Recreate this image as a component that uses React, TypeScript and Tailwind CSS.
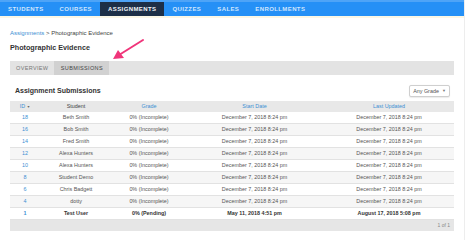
const navItems = ["STUDENTS", "COURSES", "ASSIGNMENTS", "QUIZZES", "SALES", "ENROLLMENTS"]

const rows = [
  { id: "18", student: "Beth Smith", grade: "0% (Incomplete)", start: "December 7, 2018 8:24 pm", updated: "December 7, 2018 8:24 pm" },
  { id: "16", student: "Bob Smith", grade: "0% (Incomplete)", start: "December 7, 2018 8:24 pm", updated: "December 7, 2018 8:24 pm" },
  { id: "14", student: "Fred Smith", grade: "0% (Incomplete)", start: "December 7, 2018 8:24 pm", updated: "December 7, 2018 8:24 pm" },
  { id: "12", student: "Alexa Hunters", grade: "0% (Incomplete)", start: "December 7, 2018 8:24 pm", updated: "December 7, 2018 8:24 pm" },
  { id: "10", student: "Alexa Hunters", grade: "0% (Incomplete)", start: "December 7, 2018 8:24 pm", updated: "December 7, 2018 8:24 pm" },
  { id: "8", student: "Student Demo", grade: "0% (Incomplete)", start: "December 7, 2018 8:24 pm", updated: "December 7, 2018 8:24 pm" },
  { id: "6", student: "Chris Badgett", grade: "0% (Incomplete)", start: "December 7, 2018 8:24 pm", updated: "December 7, 2018 8:24 pm" },
  { id: "4", student: "dotty", grade: "0% (Incomplete)", start: "December 7, 2018 8:24 pm", updated: "December 7, 2018 8:24 pm" },
  { id: "1", student: "Test User", grade: "0% (Pending)", start: "May 11, 2018 4:51 pm", updated: "August 17, 2018 5:08 pm", bold: true },
]

const cols = "grid grid-cols-[30px_72px_74px_137px_132px] items-center text-center"

const App = () => {
  return (
    <div className="relative w-[474px] h-[248px] overflow-hidden bg-white font-['Liberation_Sans',Arial,sans-serif]">
      <div className="w-[465px] h-[240px] border-r border-[#ededed]">
        {/* Top nav */}
        <div className="flex h-[16px] bg-[#2590f6] border-t-2 border-[#4ea4f7]">
          {navItems.map((item) => (
            <div
              key={item}
              className={`flex items-center px-[8px] text-[6px] font-bold tracking-[0.4px] ${
                item === "ASSIGNMENTS" ? "bg-[#1d2f47] text-[#f2f5f8]" : "text-[#cfe5fd]"
              }`}
            >
              {item}
            </div>
          ))}
        </div>
        <div className="h-[2px] bg-[#fbf7e6]" />

        <div className="px-[10px]">
          {/* Breadcrumb */}
          <div className="mt-[11px] text-[6px] leading-[8px] text-[#444]">
            <span className="text-[#3d8fd3]">Assignments</span> &gt; Photographic Evidence
          </div>

          <h1 className="mt-[6px] text-[7.2px] leading-[9px] font-bold text-[#333]">
            Photographic Evidence
          </h1>

          {/* Tabs */}
          <div className="mt-[9px] flex h-[14px] bg-[#e3e3e3] text-[5.5px] tracking-[0.35px]">
            <div className="flex items-center px-[6px] text-[#777]">OVERVIEW</div>
            <div className="flex items-center px-[6.5px] bg-[#d1d1d1] text-[#444]">SUBMISSIONS</div>
          </div>

          {/* Heading + filter */}
          <div className="mt-[10px] flex items-center justify-between h-[12px]">
            <h2 className="pl-[5px] text-[7px] font-bold text-[#333]">Assignment Submissions</h2>
            <div className="mr-[4px] flex items-center gap-[3px] h-[12px] w-[41px] justify-center rounded-[2px] border border-[#cfcfcf] bg-white text-[5.4px] text-[#555] shadow-[0_0.5px_1px_rgba(0,0,0,0.08)]">
              Any Grade <span className="text-[4px] text-[#777]">▼</span>
            </div>
          </div>

          {/* Table */}
          <div className="mt-[4px] text-[5.4px] text-[#555]">
            <div className={`${cols} h-[11px] bg-[#e8e8e8] text-[#3d8fd3]`}>
              <div>
                ID <span className="text-[3.5px] text-[#666]">▼</span>
              </div>
              <div className="text-[#444]">Student</div>
              <div>Grade</div>
              <div>Start Date</div>
              <div>Last Updated</div>
            </div>
            {rows.map((r, i) => (
              <div
                key={r.id}
                className={`${cols} h-[12px] border-b border-[#e2e2e2] ${
                  i % 2 === 1 ? "bg-[#f6f6f6]" : "bg-white"
                } ${r.bold ? "font-bold text-[#333]" : ""}`}
              >
                <div className="text-[#3d8fd3]">{r.id}</div>
                <div>{r.student}</div>
                <div>{r.grade}</div>
                <div>{r.start}</div>
                <div>{r.updated}</div>
              </div>
            ))}
            <div className="flex h-[11px] items-center justify-end bg-[#e6e6e6] pr-[4px] text-[5px] text-[#888]">
              1 of 1
            </div>
          </div>
        </div>
      </div>

      {/* Pink annotation arrow */}
      <svg className="absolute left-0 top-0" width="474" height="248" viewBox="0 0 474 248">
        <line x1="143" y1="40" x2="119" y2="55" stroke="#f0357a" strokeWidth="2" strokeLinecap="round" />
        <polygon points="113,59 118,50 124,58" fill="#f0357a" />
      </svg>
    </div>
  )
}

export default App
